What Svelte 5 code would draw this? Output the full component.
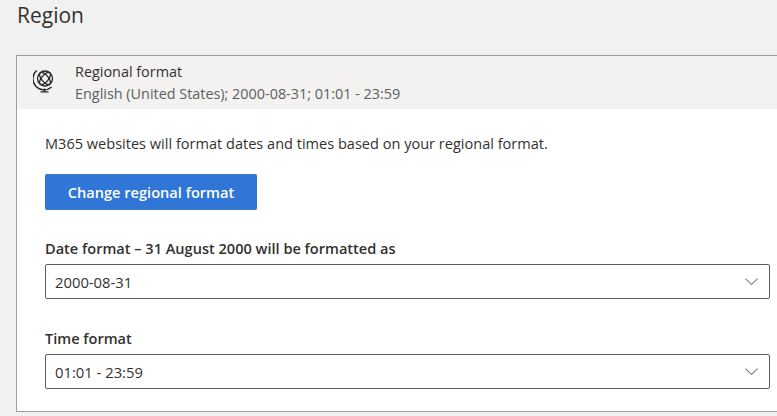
<script>
  const fields = [
    { label: "Date format – 31 August 2000 will be formatted as", value: "2000-08-31" },
    { label: "Time format", value: "01:01 - 23:59" }
  ];
</script>

<main>
  <h1>Region</h1>
  <section class="card">
    <header>
      <svg class="globe" width="22" height="24" viewBox="0 0 22 24" fill="none" stroke="#2b2826" stroke-width="1.3">
        <circle cx="12" cy="9.5" r="7.5" />
        <ellipse cx="12" cy="9.5" rx="3.4" ry="7.5" transform="rotate(40 12 9.5)" />
        <ellipse cx="12" cy="9.5" rx="3.4" ry="7.5" transform="rotate(-40 12 9.5)" />
        <path d="M3.6 1.4 A11 11 0 0 0 18.6 18" stroke-width="1.4" />
        <path d="M11.5 19.5 V22.5 M7.5 22.9 H15.5" stroke-width="1.4" />
      </svg>
      <div class="heading">
        <div class="title">Regional format</div>
        <div class="summary">English (United States); 2000-08-31; 01:01 - 23:59</div>
      </div>
    </header>
    <div class="body">
      <p>M365 websites will format dates and times based on your regional format.</p>
      <button type="button">Change regional format</button>
      {#each fields as field}
        <div class="field">
          <div class="label">{field.label}</div>
          <div class="select">
            <span>{field.value}</span>
            <svg width="13" height="7" viewBox="0 0 13 7" fill="none" stroke="#8a7f72" stroke-width="1.1">
              <path d="M0.4 0.6 L6.5 6.4 L12.6 0.6" />
            </svg>
          </div>
        </div>
      {/each}
    </div>
  </section>
</main>

<style>
  :global(body) {
    background: #f2f1f1;
    overflow: hidden;
  }

  main {
    height: 416px;
    padding-left: 16px;
    font-family: "Open Sans", "Noto Sans", sans-serif;
    color: #323130;
    overflow: hidden;
  }

  h1 {
    margin: 0;
    height: 55px;
    padding-left: 1px;
    font-size: 21px;
    line-height: 30px;
    font-weight: 400;
    color: #323130;
  }

  .card {
    width: 780px;
    height: 357px;
    box-sizing: border-box;
    border: 1px solid #a19f9d;
    background: #fff;
  }

  header {
    display: flex;
    height: 53px;
    background: #f3f2f1;
  }

  .globe {
    margin: 13px 0 0 16px;
  }

  .heading {
    margin: 5px 0 0 20px;
    font-size: 14.4px;
    line-height: 21px;
  }

  .summary {
    padding-top: 1px;
    color: #605e5c;
  }

  .body {
    padding: 24px 0 0 28px;
  }

  p {
    margin: 0;
    font-size: 14.55px;
    line-height: 20px;
  }

  button {
    display: block;
    width: 212px;
    height: 36px;
    margin-top: 21px;
    padding: 0;
    border: none;
    border-radius: 2px;
    background: #2f76d6;
    color: #fff;
    font: 600 14.6px "Open Sans", "Noto Sans", sans-serif;
  }

  .field {
    margin-top: 28px;
  }

  .field + .field {
    margin-top: 29px;
  }

  .label {
    font-size: 14.55px;
    font-weight: 600;
    line-height: 20px;
    margin-bottom: 6px;
  }

  .select {
    display: flex;
    align-items: center;
    justify-content: space-between;
    box-sizing: border-box;
    width: 725px;
    height: 35px;
    padding: 0 11px 0 9px;
    border: 1px solid #605e5c;
    border-radius: 2px;
    font-size: 14.8px;
  }
</style>
